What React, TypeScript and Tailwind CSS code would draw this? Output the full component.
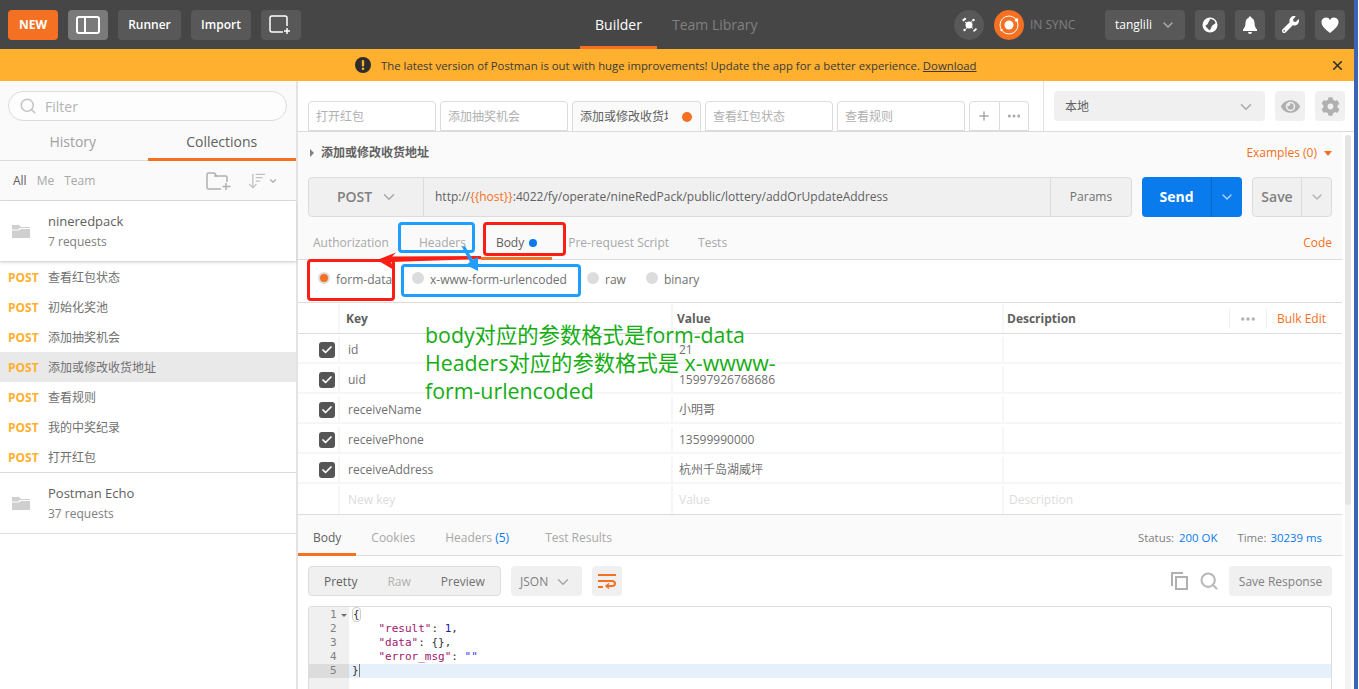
import React from 'react';
import { ChevronDown, Search, X, Plus, MoreHorizontal, Check, ArrowDownWideNarrow } from 'lucide-react';
import { FaCog, FaEye, FaWrench } from 'react-icons/fa';

const requests = ['查看红包状态', '初始化奖池', '添加抽奖机会', '添加或修改收货地址', '查看规则', '我的中奖纪录', '打开红包'];

const params = [
  { key: 'id', value: '21' },
  { key: 'uid', value: '15997926768686' },
  { key: 'receiveName', value: '小明哥' },
  { key: 'receivePhone', value: '13599990000' },
  { key: 'receiveAddress', value: '杭州千岛湖威坪' },
];

const HeaderIcon = ({ children }: { children: React.ReactNode }) => (
  <div className="w-[30px] h-[30px] rounded bg-[#585858] flex items-center justify-center text-white">{children}</div>
);

const FolderIcon = () => (
  <svg width="18" height="14" viewBox="0 0 18 14" className="text-[#cfcfcf]" fill="currentColor">
    <path d="M0 1h7l2 2h9v1H8L6.500 5.500H0z" />
    <path d="M0 6.500h7L9 5h9v9H0z" />
  </svg>
);

const Collection = ({ name, count }: { name: string; count: string }) => (
  <div className="h-[61px] bg-white flex items-center pl-3 border-b border-[#dcdcdc]">
    <FolderIcon />
    <div className="ml-[18px]">
      <div className="text-[13px] leading-[18px] text-[#606060]">{name}</div>
      <div className="text-xs leading-[18px] mt-[3px] text-[#808080]">{count}</div>
    </div>
  </div>
);

const Sidebar = () => (
  <div className="w-[298px] shrink-0 bg-white border-r-2 border-[#e3e3e3] flex flex-col">
    <div className="bg-[#fafafa]">
      <div className="h-[46px] pt-[10px] pl-2 pr-[9px]">
        <div className="h-[30px] rounded-full border border-[#dcdcdc] bg-white/60 flex items-center pl-[10px] text-[#c4c4c4]">
          <Search size={18} strokeWidth={2} />
          <span className="ml-2 pt-[1px] text-sm text-[#b4b4b4]">Filter</span>
        </div>
      </div>
      <div className="h-[34px] flex border-b border-[#dcdcdc] text-sm">
        <div className="w-[146px] pb-[3px] flex items-center justify-center text-[#a0a0a0]">History</div>
        <div className="w-[149px] ml-[2px] pb-[2px] flex items-center justify-center text-[#606060] border-b-[3px] border-[#f47023] -mb-px">Collections</div>
      </div>
      <div className="h-[40px] flex items-center pl-[13px] pr-[18px] text-xs border-b border-[#dcdcdc] text-[#a8a8a8]">
        <span className="text-[#606060]">All</span>
        <span className="ml-[10px]">Me</span>
        <span className="ml-[10px]">Team</span>
        <svg width="25" height="18" viewBox="0 0 25 18" fill="none" stroke="#b0b0b0" strokeWidth="1.500" className="ml-auto">
          <path d="M15 17H2.500a1.500 1.500 0 0 1-1.500-1.500V2.500A1.500 1.500 0 0 1 2.500 1h6l2 3H20a1.500 1.500 0 0 1 1 1.500V10" />
          <path d="M8 4h3" />
          <path d="M20 11v7M16.500 14.500h8" />
        </svg>
        <ArrowDownWideNarrow size={20} strokeWidth={1.5} className="ml-4 text-[#c0c0c0]" />
        <ChevronDown size={10} strokeWidth={3} className="ml-[1px] text-[#b0b0b0]" />
      </div>
    </div>
    <div className="shadow-sm">
      <Collection name="nineredpack" count="7 requests" />
    </div>
    {requests.map((r, i) => (
      <div key={r} className={`h-[30px] flex items-center pl-2 pt-[1px] text-xs shrink-0 ${i === 3 ? 'bg-[#e9e9e9]' : ''}`}>
        <span className="w-[40px] font-bold text-[#ffb02e]">POST</span>
        <span className="text-[#707070]">{r}</span>
      </div>
    ))}
    <div className="border-t border-[#dcdcdc]">
      <Collection name="Postman Echo" count="37 requests" />
    </div>
  </div>
);

const RequestTab = ({ label, active }: { label: string; active?: boolean }) => (
  <div className={`w-[128px] h-[30px] shrink-0 border border-[#dcdcdc] rounded-t flex items-center pl-[7px] pr-2 pt-[1px] text-xs ${active ? 'w-[129px] border-b-0 bg-[#fafafa] text-[#606060]' : 'bg-white text-[#b0b0b0]'}`}>
    <span className="flex-1 overflow-hidden whitespace-nowrap">{label}</span>
    {active && <span className="w-[10px] h-[10px] ml-[14px] rounded-full bg-[#f47023] shrink-0" />}
  </div>
);

const Radio = ({ label, checked, width }: { label: string; checked?: boolean; width: string }) => (
  <div className={`flex items-center ${width}`}>
    <span className={`w-[12px] h-[12px] rounded-full -mt-[5px] ${checked ? 'bg-[#f47023] border-2 border-[#dcdcdc]' : 'bg-[#dcdcdc]'}`} />
    <span className="ml-[6px] text-xs text-[#707070]">{label}</span>
  </div>
);

const Annotations = () => (
  <>
    <div className="absolute left-[398px] top-[222px] w-[77px] h-[31px] border-[3px] border-[#1e9fff] rounded-sm" />
    <div className="absolute left-[483px] top-[222px] w-[83px] h-[34px] border-[3px] border-[#fa1e14] rounded-sm" />
    <div className="absolute left-[307px] top-[259px] w-[88px] h-[42px] border-[3px] border-[#fa1e14] rounded-sm" />
    <div className="absolute left-[401px] top-[264px] w-[180px] h-[33px] border-[3px] border-[#1e9fff] rounded-sm" />
    <svg className="absolute left-0 top-0 pointer-events-none" width="1359" height="689">
      <polygon points="481,256 392,256.500 396,252.500 377,260 394,270 391,262 481,259" fill="#fa1e14" />
      <polygon points="462,247 465,246 473,260 478,257 478,271 466,265 470,262" fill="#1e9fff" />
    </svg>
    <div className="absolute left-[425px] top-[321px] w-[360px] text-[21.33px] leading-[28px] text-[#14ad14]">
      body对应的参数格式是form-data Headers对应的参数格式是 x-wwww-form-urlencoded
    </div>
  </>
);

const ParamsTable = () => (
  <div>
    <div className="h-[31px] flex items-center pt-[1px] border-b border-[#dcdcdc] text-xs font-bold text-[#606060] bg-white">
      <div className="w-[42px] h-full border-r-2 border-[#f6f6f6]" />
      <div className="w-[331px] pl-[6px]">Key</div>
      <div className="w-[331px] h-full flex items-center pl-[4px] border-l-2 border-[#f6f6f6]">Value</div>
      <div className="flex-1 h-full flex items-center pl-[3px] border-l-2 border-[#f6f6f6]">
        Description
        <div className="ml-auto w-[38px] flex items-center justify-center h-[20px] border-x border-[#f0f0f0] text-[#b0b0b0]">
          <MoreHorizontal size={18} strokeWidth={2.5} />
        </div>
        <span className="ml-[10px] mr-[16px] font-normal text-[#f47023]">Bulk Edit</span>
      </div>
    </div>
    {params.map(p => (
      <div key={p.key} className="h-[30px] pt-[3px] flex items-center text-xs text-[#707070] border-b-2 border-[#f6f6f6] bg-white">
        <div className="w-[42px] h-full flex items-center pl-[21px] border-r-2 border-[#f6f6f6]">
          <span className="w-[16px] h-[16px] rounded-[3px] bg-[#555555] flex items-center justify-center text-white">
            <Check size={12} strokeWidth={3.5} />
          </span>
        </div>
        <div className="w-[331px] pl-2">{p.key}</div>
        <div className="w-[331px] h-full flex items-center pl-[6px] border-l-2 border-[#f6f6f6]">{p.value}</div>
        <div className="flex-1 h-full border-l-2 border-[#f6f6f6]" />
      </div>
    ))}
    <div className="h-[31px] pt-[1px] flex items-center text-xs text-[#dcdcdc] border-b border-[#dcdcdc] bg-white">
      <div className="w-[42px] h-full border-r-2 border-[#f6f6f6]" />
      <div className="w-[331px] pl-2">New key</div>
      <div className="w-[331px] h-full flex items-center pl-[6px] border-l-2 border-[#f6f6f6]">Value</div>
      <div className="flex-1 h-full flex items-center pl-[5px] border-l-2 border-[#f6f6f6]">Description</div>
    </div>
  </div>
);

const CodeView = () => (
  <div className="ml-[10px] mr-[10px] h-[83px] border border-[#dcdcdc] border-b-0 rounded-t flex font-['DejaVu_Sans_Mono',monospace] text-[11px] leading-[14px] overflow-hidden relative">
    <div className="w-[40px] bg-[#f0f0f0] pt-[1px] text-[#808080] shrink-0 h-full">
      {[1, 2, 3, 4, 5].map(n => (
        <div key={n} className={`h-[14px] pl-[21px] flex items-center ${n === 5 ? 'bg-[#dcdcdc]' : ''}`}>
          {n}
          {n === 1 && <span className="ml-[4px] w-0 h-0 border-x-[3px] border-x-transparent border-t-[3px] border-t-[#707070]" />}
        </div>
      ))}
    </div>
    <div className="flex-1 pt-[1px] pl-[3px] text-[#333333] whitespace-pre">
      <div className="h-[14px]"><span className="border border-[#cccccc] rounded-sm">{'{'}</span></div>
      <div className="h-[14px]">{'    '}<span className="text-[#a0156b]">"result"</span>: <span className="text-[#1a1aa6]">1</span>,</div>
      <div className="h-[14px]">{'    '}<span className="text-[#a0156b]">"data"</span>: {'{}'},</div>
      <div className="h-[14px]">{'    '}<span className="text-[#a0156b]">"error_msg"</span>: <span className="text-[#3a3af0]">""</span></div>
      <div className="h-[14px] bg-[#e6f0fb] -ml-[3px] pl-[3px]">{'}'}<span className="border-l border-[#777777]" /></div>
    </div>
  </div>
);

export default function App() {
  return (
    <div className="relative w-[1359px] h-[689px] overflow-hidden bg-white flex font-['Open_Sans','Noto_Sans_CJK_SC',sans-serif]">
      <div className="w-[1354px] shrink-0 flex flex-col">
        {/* top bar */}
        <div className="h-[49px] shrink-0 bg-[#464646] flex items-center pl-2 pr-[9px] text-white">
          <div className="w-[50px] h-[30px] rounded bg-[#f47023] flex items-center justify-center text-xs font-bold">NEW</div>
          <div className="ml-[10px] w-[40px] h-[30px] rounded bg-[#7a7a7a] flex items-center justify-center">
            <svg width="24" height="18" viewBox="0 0 24 18" fill="none" stroke="white" strokeWidth="2">
              <rect x="1" y="1" width="22" height="16" rx="2" />
              <path d="M9 1v16" />
            </svg>
          </div>
          <div className="ml-[10px] w-[63px] h-[30px] rounded bg-[#585858] flex items-center justify-center text-xs font-semibold">Runner</div>
          <div className="ml-[10px] w-[60px] h-[30px] rounded bg-[#585858] flex items-center justify-center text-xs font-semibold">Import</div>
          <div className="ml-[10px] w-[40px] h-[30px] rounded bg-[#585858] flex items-center justify-center">
            <svg width="24" height="20" viewBox="0 0 24 20" fill="none" stroke="white" strokeWidth="1.500">
              <path d="M14 17H3a2 2 0 0 1-2-2V3a2 2 0 0 1 2-2h13a2 2 0 0 1 2 2v8" />
              <path d="M18 13v6M15 16h6" />
            </svg>
          </div>
          <div className="ml-[279px] w-[77px] h-full flex items-center justify-center text-sm border-b-[3px] border-[#f47023] pt-[3px]">Builder</div>
          <div className="ml-[15px] text-sm text-[#808080]">Team Library</div>
          <div className="ml-auto flex items-center">
            <div className="w-[30px] h-[30px] rounded-full bg-[#585858] flex items-center justify-center">
              <svg width="20" height="20" viewBox="0 0 20 20" fill="white">
                <circle cx="10" cy="10" r="3.500" />
                <path d="M3 5l3-2.500 1.500 1.500-3 2.500zM14 15.500l3-2.500 1 1.500-3 2.500z" />
                <path d="M6 7l2 1.500M12 12l2 1.500M13.500 5.500l-1.500 2M8 12.500l-1.500 2" stroke="white" />
                <circle cx="14.500" cy="5" r="1.200" />
                <circle cx="5.500" cy="15" r="1.200" />
              </svg>
            </div>
            <div className="ml-[10px] w-[30px] h-[30px] rounded-full bg-[#f47023] flex items-center justify-center">
              <svg width="24" height="24" viewBox="0 0 24 24" fill="white">
                <circle cx="12" cy="12" r="4.500" />
                <circle cx="12" cy="12" r="9" fill="none" stroke="white" strokeWidth="1" />
                <circle cx="19.500" cy="7" r="1.800" />
                <circle cx="4.500" cy="17" r="1.200" />
              </svg>
            </div>
            <span className="ml-[6px] w-[75px] text-xs text-[#808080]">IN SYNC</span>
            <div className="w-[80px] h-[30px] rounded bg-[#585858] flex items-center pl-[10px] text-xs">
              tanglili
              <ChevronDown size={16} strokeWidth={2} className="ml-2 text-[#b0b0b0]" />
            </div>
            <div className="ml-[10px] flex gap-[10px]">
              <HeaderIcon>
                <svg width="18" height="18" viewBox="0 0 18 18">
                  <circle cx="9" cy="9" r="7.500" fill="white" />
                  <path d="M9 3c2.500 0 5 1.500 5.500 4-1 2-2.500 1-3.500 3s-1 3-3 4.500c0-2-3-2.500-3.500-5C6 9 7 8 7.500 6 8.500 5 8.500 4 9 3z" fill="#585858" />
                </svg>
              </HeaderIcon>
              <HeaderIcon>
                <svg width="16" height="18" viewBox="0 0 16 18" fill="white">
                  <path d="M8 0.500c1 0 1.500.7 1.500 1.500 2.200.7 3 2.800 3 5 0 3 1 5 2.500 6.500v1.500H1v-1.500C2.500 12 3.500 10 3.500 7c0-2.200.8-4.300 3-5 0-.8.500-1.500 1.500-1.500z" />
                  <path d="M6 16h4a2 2 0 0 1-4 0z" />
                </svg>
              </HeaderIcon>
              <HeaderIcon>
                <FaWrench size={17} />
              </HeaderIcon>
              <HeaderIcon>
                <svg width="18" height="16" viewBox="0 0 18 16" fill="white">
                  <path d="M9 16C4 12 0.500 9 0.500 5A4.500 4.500 0 0 1 9 3a4.500 4.500 0 0 1 8.500 2c0 4-3.500 7-8.500 11z" />
                </svg>
              </HeaderIcon>
            </div>
          </div>
        </div>

        {/* update banner */}
        <div className="h-[32px] shrink-0 bg-[#ffb02e] flex items-center pl-[355px] pr-[9px] text-[11.35px] text-[#3a3a3a]">
          <svg width="16" height="16" viewBox="0 0 16 16" className="shrink-0">
            <circle cx="8" cy="8" r="8" fill="#2d2d2d" />
            <rect x="6.800" y="3" width="2.400" height="6.500" rx="1" fill="#ffb02e" />
            <circle cx="8" cy="11.800" r="1.300" fill="#ffb02e" />
          </svg>
          <span className="ml-[10px] pt-[1px]">The latest version of Postman is out with huge improvements! Update the app for a better experience. <span className="underline">Download</span></span>
          <X size={15} strokeWidth={2.5} className="ml-auto text-[#2d2d2d]" />
        </div>

        <div className="flex-1 flex min-h-0">
          <Sidebar />
          <div className="flex-1 flex flex-col min-w-0">
            {/* tab strip and environment */}
            <div className="h-[51px] shrink-0 flex border-b border-[#dcdcdc]">
              <div className="w-[745px] pl-[10px] pt-5 flex gap-1 border-r-0">
                <RequestTab label="打开红包" />
                <RequestTab label="添加抽奖机会" />
                <RequestTab label="添加或修改收货地址" active />
                <RequestTab label="查看红包状态" />
                <RequestTab label="查看规则" />
                <div className="w-[60px] h-[30px] shrink-0 border border-[#dcdcdc] rounded-t flex text-[#a8a8a8]">
                  <div className="flex-1 flex items-center justify-center border-r border-[#dcdcdc]"><Plus size={14} strokeWidth={2.5} /></div>
                  <div className="flex-1 flex items-center justify-center"><MoreHorizontal size={16} strokeWidth={2.5} /></div>
                </div>
              </div>
              <div className="flex-1 border-l border-[#e3e3e3] pt-[10px] pl-[10px] flex h-[50px]">
                <div className="w-[211px] h-[30px] rounded bg-[#f0f0f0] flex items-center pl-[11px] pt-[1px] pr-[10px] text-xs text-[#606060]">
                  本地
                  <ChevronDown size={18} strokeWidth={2} className="ml-auto text-[#a8a8a8]" />
                </div>
                <div className="ml-[10px] w-[30px] h-[30px] rounded bg-[#f0f0f0] flex items-center justify-center text-[#b0b0b0]"><FaEye size={19} /></div>
                <div className="ml-[10px] w-[30px] h-[30px] rounded bg-[#f0f0f0] flex items-center justify-center text-[#b0b0b0]"><FaCog size={19} /></div>
              </div>
            </div>

            <div className="flex-1 flex min-h-0">
              <div className="w-[1044px] shrink-0 flex flex-col min-h-0">
                <div className="bg-[#fafafa]">
                  <div className="h-[45px] flex items-center pl-[12px] pb-[3px] pr-[10px]">
                    <span className="w-0 h-0 border-y-[4px] border-y-transparent border-l-[4px] border-l-[#808080]" />
                    <span className="ml-[7px] text-xs font-bold text-[#606060]">添加或修改收货地址</span>
                    <span className="ml-auto text-xs text-[#f47023]">Examples (0)</span>
                    <span className="ml-[7px] w-0 h-0 border-x-[4px] border-x-transparent border-t-[5px] border-t-[#f47023]" />
                  </div>
                  <div className="h-[40px] flex px-[10px]">
                    <div className="w-[824px] flex border border-[#dcdcdc] rounded bg-[#f0f0f0]">
                      <div className="w-[115px] flex items-center justify-center pl-[3px] text-sm font-semibold text-[#808080] border-r border-[#dcdcdc]">
                        POST
                        <ChevronDown size={18} strokeWidth={2} className="ml-[8px] text-[#a8a8a8]" />
                      </div>
                      <div className="flex-1 flex items-center pl-[11px] text-xs text-[#606060]">
                        <span>http://<span className="text-[#f47023]">{'{{host}}'}</span>:4022/fy/operate/nineRedPack/public/lottery/addOrUpdateAddress</span>
                      </div>
                      <div className="w-[81px] flex items-center justify-center text-xs text-[#707070] border-l border-[#dcdcdc]">Params</div>
                    </div>
                    <div className="ml-[10px] w-[100px] flex rounded bg-[#097bed] text-white">
                      <div className="w-[69px] flex items-center justify-center text-sm font-bold">Send</div>
                      <div className="flex-1 flex items-center justify-center border-l border-[#0a68c4] text-[#b5d3f3]"><ChevronDown size={16} strokeWidth={2} /></div>
                    </div>
                    <div className="ml-[10px] w-[80px] flex rounded border border-[#dcdcdc] bg-[#f0f0f0]">
                      <div className="w-[48px] flex items-center justify-center text-sm font-semibold text-[#808080]">Save</div>
                      <div className="flex-1 flex items-center justify-center border-l border-[#dcdcdc] text-[#b0b0b0]"><ChevronDown size={16} strokeWidth={2} /></div>
                    </div>
                  </div>
                  <div className="h-[43px] flex items-center text-xs text-[#a8a8a8] border-b border-[#dcdcdc] pr-[10px] pl-[15px] relative pt-[9px]">
                    <span>Authorization</span>
                    <span className="ml-[30px]">Headers</span>
                    <span className="ml-[30px] text-[#606060]">Body</span>
                    <span className="ml-[5px] w-2 h-2 rounded-full bg-[#097bed]" />
                    <span className="ml-[31px]">Pre-request Script</span>
                    <span className="ml-[29px]">Tests</span>
                    <span className="ml-auto text-[#f47023]">Code</span>
                    <span className="absolute left-[183px] bottom-[-1px] w-[71px] h-[3px] bg-[#f47023]" />
                  </div>
                </div>
                <div className="h-[43px] flex items-center pl-5 pb-[2px] border-b border-[#dcdcdc]">
                  <Radio label="form-data" checked width="w-[94px]" />
                  <Radio label="x-www-form-urlencoded" width="w-[175px]" />
                  <Radio label="raw" width="w-[59px]" />
                  <Radio label="binary" width="w-[70px]" />
                </div>
                <ParamsTable />
                <div className="h-[41px] flex items-center pt-[5px] text-xs bg-[#fafafa] border-b border-[#dcdcdc] text-[#a8a8a8] relative pr-5">
                  <span className="ml-[15px] text-[#606060]">Body</span>
                  <span className="ml-[30px]">Cookies</span>
                  <span className="ml-[30px]">Headers <span className="text-[#097bed]">(5)</span></span>
                  <span className="ml-[36px]">Test Results</span>
                  <span className="ml-auto text-[11.4px] text-[#808080]">Status:</span>
                  <span className="ml-[5px] text-[11.4px] text-[#097bed]">200 OK</span>
                  <span className="ml-[20px] text-[11.4px] text-[#808080]">Time:</span>
                  <span className="ml-[4px] text-[11.4px] text-[#097bed]">30239 ms</span>
                  <span className="absolute left-0 bottom-[-1px] w-[58px] h-[3px] bg-[#f47023]" />
                </div>
                <div className="h-[50px] pt-[10px] pl-[10px] pr-[10px] flex text-xs">
                  <div className="w-[193px] h-[30px] pt-[1px] rounded border border-[#dcdcdc] bg-[#f0f0f0] flex items-center pl-[15px] text-[#b0b0b0]">
                    <span className="text-[#606060]">Pretty</span>
                    <span className="ml-[30px]">Raw</span>
                    <span className="ml-[30px] text-[#707070]">Preview</span>
                  </div>
                  <div className="ml-[10px] w-[71px] h-[30px] pt-[1px] rounded bg-[#f0f0f0] flex items-center pl-[9px] text-[#808080]">
                    JSON
                    <ChevronDown size={18} strokeWidth={2} className="ml-[6px] text-[#a8a8a8]" />
                  </div>
                  <div className="ml-[10px] w-[30px] h-[30px] rounded bg-[#f0f0f0] flex items-center justify-center">
                    <svg width="18" height="16" viewBox="0 0 18 16" fill="none" stroke="#f47023" strokeWidth="2">
                      <path d="M0 2h18M0 8h14c4 0 4 5 0 5h-5M0 14h5" />
                      <path d="M11 10.500l-3 2.500 3 2.500" strokeWidth="1.500" />
                    </svg>
                  </div>
                  <svg width="17" height="18" viewBox="0 0 17 18" fill="none" stroke="#b0b0b0" strokeWidth="2" className="ml-auto mt-[6px]">
                    <path d="M1 14V1h11" />
                    <rect x="5" y="5" width="11" height="12" />
                  </svg>
                  <Search size={20} strokeWidth={2.5} className="ml-[11px] mt-[5px] text-[#b8b8b8]" />
                  <div className="ml-[10px] w-[103px] h-[30px] pt-[1px] rounded bg-[#f0f0f0] flex items-center justify-center text-[#808080]">Save Response</div>
                </div>
                <CodeView />
              </div>
              <div className="flex-1 pl-[3px] pt-[3px] pr-[3px] bg-white">
                <div className="h-full rounded-t bg-[#f3f3f3]">
                  <div className="h-[370px] rounded bg-[#e4e4e4]" />
                </div>
              </div>
            </div>
          </div>
        </div>
      </div>
      <div className="w-[4px] shrink-0 bg-[#3c66b5]" />
      <Annotations />
    </div>
  );
}
